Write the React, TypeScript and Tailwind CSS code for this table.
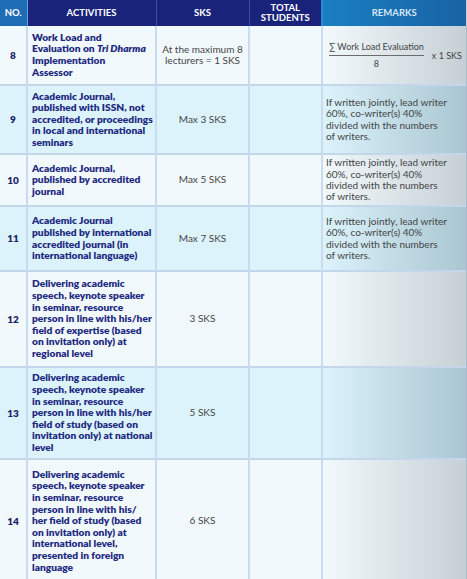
import React from 'react';

type Row = {
  no: number;
  activity: React.ReactNode;
  sks: React.ReactNode;
  remarks?: React.ReactNode;
  h: string;
  alt: boolean;
};

const JOINT = (
  <>
    If written jointly, lead writer
    <br />
    60%, co-writer(s) 40%
    <br />
    divided with the numbers
    <br />
    of writers.
  </>
);

const rows: Row[] = [
  {
    no: 8,
    activity: (
      <>
        Work Load and
        <br />
        Evaluation on <i>Tri Dharma</i>
        <br />
        Implementation
        <br />
        Assessor
      </>
    ),
    sks: (
      <>
        At the maximum 8
        <br />
        lecturers = 1 SKS
      </>
    ),
    remarks: (
      <div className="flex items-center gap-[8px] pl-[3px]">
        <div className="flex flex-col items-center">
          <span className="text-[9px] leading-[10px] pb-[3px] border-b border-[#6b6b6b]">∑ Work Load Evaluation</span>
          <span className="text-[9px] leading-[10px] pt-[3px]">8</span>
        </div>
        <span className="text-[9px] pt-[1px]">x 1 SKS</span>
      </div>
    ),
    h: 'h-[59px]',
    alt: false,
  },
  {
    no: 9,
    activity: (
      <>
        Academic Journal,
        <br />
        published with ISSN, not
        <br />
        accredited, or proceedings
        <br />
        in local and international
        <br />
        seminars
      </>
    ),
    sks: 'Max 3 SKS',
    remarks: JOINT,
    h: 'h-[69px]',
    alt: true,
  },
  {
    no: 10,
    activity: (
      <>
        Academic Journal,
        <br />
        published by accredited
        <br />
        journal
      </>
    ),
    sks: 'Max 5 SKS',
    remarks: JOINT,
    h: 'h-[52px]',
    alt: false,
  },
  {
    no: 11,
    activity: (
      <>
        Academic Journal
        <br />
        published by international
        <br />
        accredited journal (in
        <br />
        international language)
      </>
    ),
    sks: 'Max 7 SKS',
    remarks: JOINT,
    h: 'h-[65px]',
    alt: true,
  },
  {
    no: 12,
    activity: (
      <>
        Delivering academic
        <br />
        speech, keynote speaker
        <br />
        in seminar, resource
        <br />
        person in line with his/her
        <br />
        field of expertise (based
        <br />
        on invitation only) at
        <br />
        regional level
      </>
    ),
    sks: '3 SKS',
    h: 'h-[96px]',
    alt: false,
  },
  {
    no: 13,
    activity: (
      <>
        Delivering academic
        <br />
        speech, keynote speaker
        <br />
        in seminar, resource
        <br />
        person in line with his/her
        <br />
        field of study (based on
        <br />
        invitation only) at national
        <br />
        level
      </>
    ),
    sks: '5 SKS',
    h: 'h-[92px]',
    alt: true,
  },
  {
    no: 14,
    activity: (
      <>
        Delivering academic
        <br />
        speech, keynote speaker
        <br />
        in seminar, resource
        <br />
        person in line with his/
        <br />
        her field of study (based
        <br />
        on invitation only) at
        <br />
        international level,
        <br />
        presented in foreign
        <br />
        language
      </>
    ),
    sks: '6 SKS',
    h: 'h-[124px]',
    alt: false,
  },
];

export default function App() {
  return (
    <div
      className="w-[467px] h-[579px] overflow-hidden bg-[#f2f9fd]"
      style={{ fontFamily: 'Lato, "Noto Sans", sans-serif' }}
    >
      <table className="w-[467px] table-fixed border-collapse">
        <colgroup>
          <col className="w-[27px]" />
          <col className="w-[129px]" />
          <col className="w-[93px]" />
          <col className="w-[73px]" />
          <col className="w-[145px]" />
        </colgroup>
        <thead>
          <tr className="h-[26px] text-white text-[9.5px] font-extrabold leading-[10px]">
            <th className="bg-[#1f6cb6] border-r border-[#5fa6dc]">NO.</th>
            <th className="bg-[#1a237a] border-r border-[#3a4fa8]">ACTIVITIES</th>
            <th className="bg-[#1a237a] border-r border-[#3a4fa8]">SKS</th>
            <th className="bg-[#1a237a] border-r-2 border-[#2b8bd0]">
              TOTAL
              <br />
              STUDENTS
            </th>
            <th className="bg-gradient-to-r from-[#1b7fc3] to-[#1763a3] text-[#d5e6f4] border-r-[3px] border-r-[#c9ced8]">
              REMARKS
            </th>
          </tr>
        </thead>
        <tbody>
          {rows.map((r) => (
            <tr key={r.no} className={`${r.h} ${r.alt ? 'bg-[#dcf3fc]' : 'bg-[#f2f9fd]'} border-b-2 border-[#c3d6ec]`}>
              <td className="border-r-2 border-[#c9dcef] text-center text-[10px] font-extrabold text-[#1c2366]">
                {r.no}
              </td>
              <td className="border-r-2 border-[#c9dcef] pl-[4px] pr-0 text-[10.2px] leading-[11.6px] font-extrabold text-[#1e2a80] whitespace-nowrap">
                {r.activity}
              </td>
              <td className="border-r-2 border-[#c9dcef] text-center text-[10px] leading-[11.5px] text-[#454545]">
                {r.sks}
              </td>
              <td className="border-r-2 border-[#c9dcef]" />
              <td
                className={`${
                  r.alt
                    ? 'bg-gradient-to-r from-[#dcf3fc] to-[#a9c6d0]'
                    : 'bg-gradient-to-r from-[#f2f9fd] to-[#c6d0d4]'
                } border-r-[3px] border-r-[#a9bccf] pl-[3px] pr-0 text-[10px] leading-[11.3px] text-[#444] align-middle whitespace-nowrap`}
              >
                {r.remarks}
              </td>
            </tr>
          ))}
        </tbody>
      </table>
    </div>
  );
}
